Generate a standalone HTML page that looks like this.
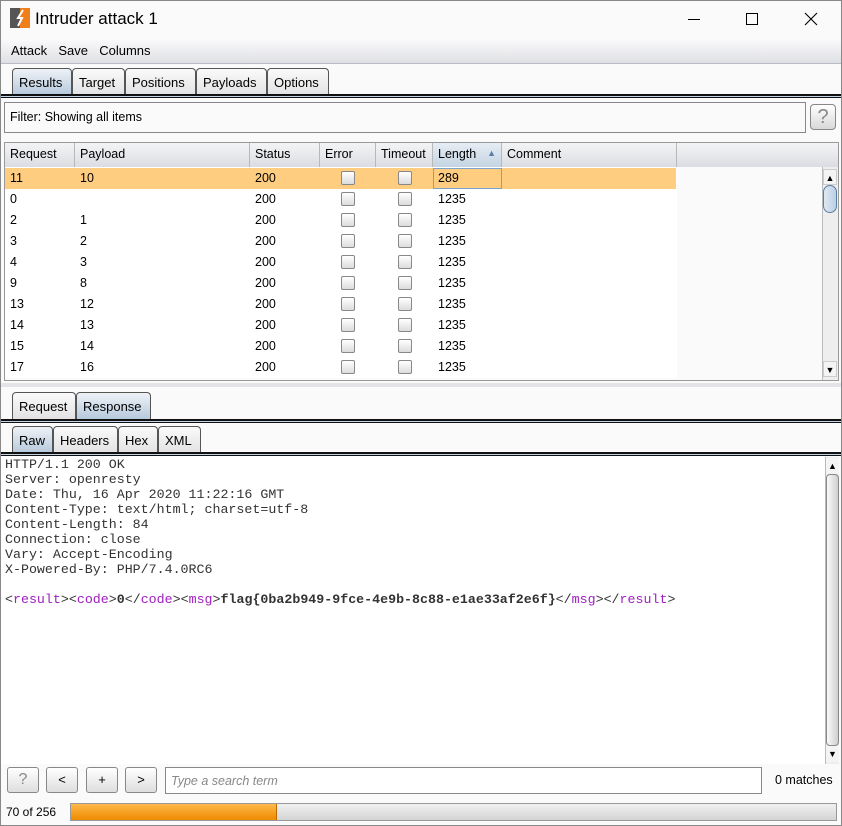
<!DOCTYPE html>
<html><head><meta charset="utf-8"><style>
*{box-sizing:border-box;margin:0;padding:0}
body{width:842px;height:826px;background:#fafafa;font-family:"Liberation Sans",Arial,sans-serif;font-size:12px;color:#000;position:relative;overflow:hidden}
.a{position:absolute}
.win{left:0;top:0;width:842px;height:826px;border:1px solid #888;}
.tab{position:absolute;height:27px;border:1px solid #555;border-bottom:none;border-radius:4px 4px 0 0;background:linear-gradient(#fafafa,#e2e2e4);padding:6px 6px 0;font-size:13px}
.tab.sel{background:linear-gradient(#eef2f7,#b6c9dc)}
.line{position:absolute;left:1px;right:1px;height:4px;background:#c2d4e6;border-top:2px solid #111;border-bottom:1px solid #111}
.hd{position:absolute;top:0;height:24px;border-right:1px solid #b8b8b8;padding:4px 5px;font-size:12.5px;background:linear-gradient(#f4f4f6,#dcdde2)}
.row{position:absolute;left:0;width:671px;height:21px;font-size:12.5px}
.row span{position:absolute;top:3px}
.cb{position:absolute;top:3px;width:14px;height:14px;border:1px solid #888;border-radius:2px;background:linear-gradient(#fff,#dcdcdc)}
pre{font-family:"Liberation Mono","Courier New",monospace;font-size:13.3px;line-height:15px;color:#333}
.btn{position:absolute;top:767px;width:21px;height:26px;border:1px solid #888;border-radius:3px;background:linear-gradient(#fff,#dedede);text-align:center;line-height:24px;font-size:13px}
.p{color:#a020c0}
</style></head><body>
<div class="a win"></div>
<div class="a" style="left:10px;top:8px;width:20px;height:20px;background:#555"></div>
<div class="a" style="left:20px;top:8px;width:10px;height:20px;background:#f07f1a"></div>
<svg class="a" style="left:10px;top:8px" width="20" height="20"><path d="M13 2 L8 10 L12 10 L8 18" stroke="#fff" stroke-width="2" fill="none"/></svg>
<div class="a" style="left:35px;top:9px;font-size:17px">Intruder attack 1</div>
<div class="a" style="left:688px;top:19px;width:12px;height:1px;background:#000"></div>
<div class="a" style="left:746px;top:13px;width:12px;height:12px;border:1px solid #000"></div>
<svg class="a" style="left:804px;top:12px" width="14" height="14"><path d="M1 1L13 13M13 1L1 13" stroke="#000" stroke-width="1.1"/></svg>
<div class="a" style="left:1px;top:38px;width:840px;height:26px;background:linear-gradient(#fbfbfc,#dfe0e4);border-bottom:1px solid #b8bcc6"></div>
<div class="a" style="left:11px;top:43px;font-size:13px;word-spacing:2px">Attack&nbsp; Save&nbsp; Columns</div>
<div class="tab sel" style="left:12px;top:68px;width:60px">Results</div>
<div class="tab" style="left:72px;top:68px;width:53px">Target</div>
<div class="tab" style="left:125px;top:68px;width:71px">Positions</div>
<div class="tab" style="left:196px;top:68px;width:71px">Payloads</div>
<div class="tab" style="left:267px;top:68px;width:62px">Options</div>
<div class="line" style="top:94px"></div>
<div class="a" style="left:4px;top:102px;width:802px;height:31px;border:1px solid #888;background:#fafafa;padding:7px 5px;font-size:12.5px">Filter: Showing all items</div>
<div class="a" style="left:810px;top:104px;width:26px;height:26px;border:1px solid #888;border-radius:4px;background:linear-gradient(#fff,#d8d8d8);text-align:center;font-size:20px;color:#888;line-height:24px">?</div>
<div class="a" style="left:4px;top:142px;width:835px;height:239px;border:1px solid #999;background:#fafafa">
 <div class="a" style="left:0;top:0;width:833px;height:24px;background:linear-gradient(#f4f4f6,#dcdde2)"></div>
 <div class="hd" style="left:0;width:70px">Request</div>
 <div class="hd" style="left:70px;width:175px">Payload</div>
 <div class="hd" style="left:245px;width:70px">Status</div>
 <div class="hd" style="left:315px;width:56px">Error</div>
 <div class="hd" style="left:371px;width:57px">Timeout</div>
 <div class="hd" style="left:428px;width:69px;background:linear-gradient(#e6edf4,#c4d4e3)">Length<span style="position:absolute;right:5px;top:5px;color:#5a7ea6;font-size:9px">▲</span></div>
 <div class="hd" style="left:497px;width:175px">Comment</div>
 <div class="a" style="left:0;top:24px;width:672px;height:211px;background:#fff"></div>
 <div id="rows"></div>
 <div class="a" style="left:817px;top:24px;width:16px;height:213px;background:#eee;border-left:1px solid #bbb"></div>
 <div class="a" style="left:818px;top:26px;width:14px;height:16px;font-size:9px;text-align:center;line-height:16px;border:1px solid #ccc;background:#f4f4f4">▲</div>
 <div class="a" style="left:818px;top:42px;width:14px;height:28px;border:1px solid #5d7ea3;border-radius:8px;background:linear-gradient(90deg,#dde8f3,#bcd0e4)"></div>
 <div class="a" style="left:818px;top:218px;width:14px;height:16px;font-size:9px;text-align:center;line-height:16px;border:1px solid #ccc;background:#f4f4f4">▼</div>
</div>
<div class="a" style="left:1px;top:383px;width:840px;height:4px;background:#e2e4e8"></div>
<div class="tab" style="left:12px;top:392px;width:64px">Request</div>
<div class="tab sel" style="left:76px;top:392px;width:75px">Response</div>
<div class="line" style="top:419px"></div>
<div class="tab sel" style="left:12px;top:426px;width:41px">Raw</div>
<div class="tab" style="left:53px;top:426px;width:65px">Headers</div>
<div class="tab" style="left:118px;top:426px;width:40px">Hex</div>
<div class="tab" style="left:158px;top:426px;width:43px">XML</div>
<div class="line" style="top:452px"></div>
<div class="a" style="left:1px;top:456px;width:824px;height:308px;background:#fff"></div>
<pre class="a" style="left:5px;top:457px">HTTP/1.1 200 OK
Server: openresty
Date: Thu, 16 Apr 2020 11:22:16 GMT
Content-Type: text/html; charset=utf-8
Content-Length: 84
Connection: close
Vary: Accept-Encoding
X-Powered-By: PHP/7.4.0RC6

&lt;<span class="p">result</span>&gt;&lt;<span class="p">code</span>&gt;<b>0</b>&lt;/<span class="p">code</span>&gt;&lt;<span class="p">msg</span>&gt;<b>flag{0ba2b949-9fce-4e9b-8c88-e1ae33af2e6f}</b>&lt;/<span class="p">msg</span>&gt;&lt;/<span class="p">result</span>&gt;</pre>
<div class="a" style="left:825px;top:457px;width:14px;height:307px;background:#eee;border-left:1px solid #bbb"></div>
<div class="a" style="left:826px;top:458px;width:13px;height:16px;font-size:9px;text-align:center;line-height:16px;background:#f4f4f4">▲</div>
<div class="a" style="left:826px;top:474px;width:13px;height:272px;border:1px solid #888;border-radius:4px;background:linear-gradient(90deg,#fafafa,#cfcfcf)"></div>
<div class="a" style="left:826px;top:746px;width:13px;height:16px;font-size:9px;text-align:center;line-height:16px;background:#f4f4f4">▼</div>
<div class="btn" style="left:7px;width:32px;color:#888;font-size:16px">?</div>
<div class="btn" style="left:46px;width:32px">&lt;</div>
<div class="btn" style="left:86px;width:32px">+</div>
<div class="btn" style="left:125px;width:32px">&gt;</div>
<div class="a" style="left:165px;top:767px;width:597px;height:27px;border:1px solid #888;background:#fff;padding:6px 5px;color:#888;font-style:italic;font-size:12.5px">Type a search term</div>
<div class="a" style="left:775px;top:773px;font-size:12.5px">0 matches</div>
<div class="a" style="left:6px;top:805px;font-size:12px">70 of 256</div>
<div class="a" style="left:70px;top:803px;width:767px;height:18px;border:1px solid #999;background:linear-gradient(#f0f0f0,#d4d4d4)"></div>
<div class="a" style="left:71px;top:804px;width:206px;height:16px;background:linear-gradient(#ffb84a,#ee8a00);border-right:1px solid #c06a00"></div>
<script>
var d=[["11","10","289"],["0","","1235"],["2","1","1235"],["3","2","1235"],["4","3","1235"],["9","8","1235"],["13","12","1235"],["14","13","1235"],["15","14","1235"],["17","16","1235"]];
var h="";d.forEach(function(r,i){var t=25+i*21;var bg=i==0?"#ffcd80":"#fff";
h+='<div class="row" style="top:'+t+'px;background:'+bg+'"><span style="left:5px">'+r[0]+'</span><span style="left:75px">'+r[1]+'</span><span style="left:250px">200</span><div class="cb" style="left:336px"></div><div class="cb" style="left:393px"></div>'+(i==0?'<div style="position:absolute;left:428px;top:0;width:69px;height:21px;border:1px solid #7ba3cc"></div>':'')+'<span style="left:433px">'+r[2]+'</span></div>';});
document.getElementById("rows").innerHTML=h;
</script>
</body></html>
